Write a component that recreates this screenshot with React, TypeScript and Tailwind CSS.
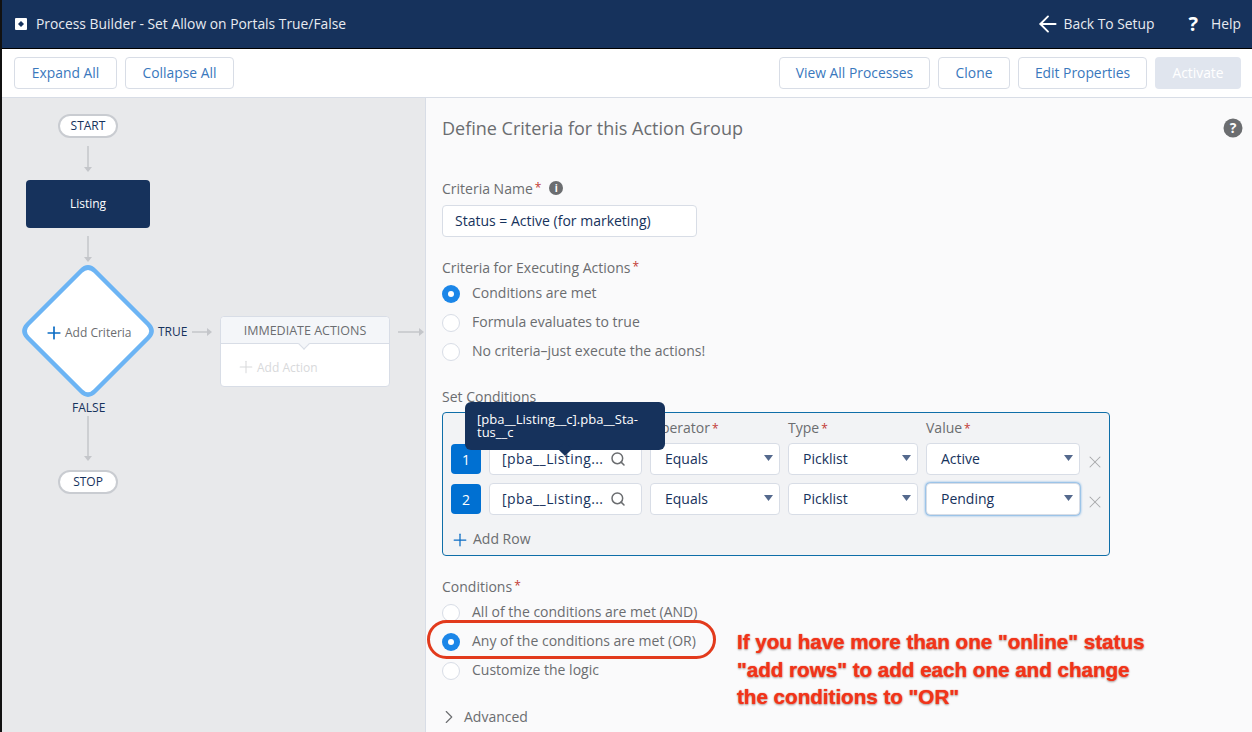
import { ArrowLeft, ChevronRight, Plus, Search, X } from "lucide-react"

const font = "font-['Open_Sans','Noto_Sans',sans-serif]"

function Star() {
  return <span className="ml-[2px] text-[12px] text-[#c23934]">*</span>
}

function ToolbarButton({ label, className = "" }: { label: string; className?: string }) {
  return (
    <button
      type="button"
      className={`h-8 rounded-[4px] border border-[#d8dde6] bg-white pt-[1px] text-[13.85px] text-[#3a78bd] ${className}`}
    >
      {label}
    </button>
  )
}

function Radio({ label, checked = false }: { label: string; checked?: boolean }) {
  return (
    <div className="flex h-[29px] items-center">
      {checked ? (
        <span className="flex h-[18px] w-[18px] items-center justify-center rounded-full bg-[#1b86e8]">
          <span className="h-[6px] w-[6px] rounded-full bg-white" />
        </span>
      ) : (
        <span className="h-[18px] w-[18px] rounded-full border border-[#d8dde6] bg-white" />
      )}
      <span className="ml-[12px] -translate-y-[1px] text-[14px] text-[#6b6d70]">{label}</span>
    </div>
  )
}

function Select({ value, className = "" }: { value: string; className?: string }) {
  return (
    <div
      className={`flex h-8 items-center justify-between rounded-[4px] border border-[#d8dde6] bg-white pl-[14px] text-[14px] text-[#16325c] ${className}`}
    >
      <span className="-translate-y-[1px]">{value}</span>
      <svg width="16" height="8" viewBox="0 0 16 8" className="-translate-y-[1px]">
        <path d="M1 1h9L5.5 7z" fill="#54698d" />
      </svg>
    </div>
  )
}

function ConditionRow({ n, value, focused }: { n: number; value: string; focused?: boolean }) {
  return (
    <div className="flex items-center">
      <div className="flex h-[30px] w-[30px] items-center justify-center rounded-[4px] bg-[#0070d2] text-[14px] text-white">
        {n}
      </div>
      <div className="ml-2 flex h-8 w-[153px] items-center justify-between rounded-[4px] border border-[#d8dde6] bg-white pl-[12px] pr-[15px] text-[14px] text-[#16325c]">
        <span className="-translate-y-[1px] whitespace-nowrap tracking-[0.4px]">[pba__Listing...</span>
        <Search size={16} strokeWidth={2.25} className="shrink-0 text-[#6b6d70]" />
      </div>
      <Select value="Equals" className="ml-2 w-[130px]" />
      <Select value="Picklist" className="ml-2 w-[130px]" />
      <Select
        value={value}
        className={`ml-2 w-[154px] ${focused ? "border-[#0070d2] shadow-[0_0_3px_#0070d2]" : ""}`}
      />
      <X size={20} strokeWidth={1.25} className="ml-[5px] translate-y-[3px] text-[#a8a9ab]" />
    </div>
  )
}

function ArrowDown({ x, y, h }: { x: number; y: number; h: number }) {
  return (
    <svg className="absolute" style={{ left: x - 5, top: y }} width="10" height={h} viewBox={`0 0 10 ${h}`}>
      <path d={`M5 0V${h - 4}`} stroke="#c4c6ca" strokeWidth="1.5" />
      <path d={`M1 ${h - 5}h8l-4 5z`} fill="#c4c6ca" />
    </svg>
  )
}

function ArrowRight({ x, y, w }: { x: number; y: number; w: number }) {
  return (
    <svg className="absolute" style={{ left: x, top: y - 5 }} width={w} height="10" viewBox={`0 0 ${w} 10`}>
      <path d={`M0 5H${w - 4}`} stroke="#c4c6ca" strokeWidth="1.5" />
      <path d={`M${w - 5} 1v8l5-4z`} fill="#c4c6ca" />
    </svg>
  )
}

function Pill({ label, top }: { label: string; top: number }) {
  return (
    <div
      className="absolute left-[56px] flex h-[24px] w-[60px] items-center justify-center rounded-full border-2 border-[#c9ccd1] bg-white text-[12px] text-[#16325c]"
      style={{ top }}
    >
      {label}
    </div>
  )
}

function Canvas() {
  return (
    <div className="relative w-[424px] shrink-0 border-r border-[#d8dde6] bg-[#e8e9eb]">
      {/* positions below are relative to the panel, which starts at y=98 */}
      <Pill label="START" top={16} />
      <ArrowDown x={86} y={48} h={26} />
      <div className="absolute left-[24px] top-[82px] flex h-[48px] w-[124px] items-center justify-center rounded-[4px] bg-[#16325c] text-[12px] text-white">
        Listing
      </div>
      <ArrowDown x={86} y={138} h={26} />
      <svg className="absolute left-[18px] top-[165px]" width="136" height="136" viewBox="0 0 136 136">
        <path
          d="M61 8Q68 1 75 8L128 61Q135 68 128 75L75 128Q68 135 61 128L8 75Q1 68 8 61Z"
          fill="white"
          stroke="#6cb4f4"
          strokeWidth="4.5"
        />
      </svg>
      <div className="absolute left-[42px] top-[225px] flex items-center text-[12px] text-[#6b6d70]">
        <Plus size={20} strokeWidth={2} className="mr-[1px] text-[#0b6cc4]" />
        Add Criteria
      </div>
      <div className="absolute left-[156px] top-[225px] text-[12px] text-[#16325c]">TRUE</div>
      <ArrowRight x={190} y={234} w={20} />
      <div className="absolute left-[218px] top-[218px] h-[71px] w-[170px] rounded-[4px] border border-[#d8dde6] bg-white">
        <div className="relative flex h-[27px] items-center justify-center rounded-t-[4px] border-b border-[#d8dde6] bg-[#f4f6f9] pt-[2px] text-[12.5px] text-[#6b6d70]">
          IMMEDIATE ACTIONS
          <span className="absolute -bottom-[5px] left-[79px] h-2 w-2 rotate-45 border-b border-r border-[#d8dde6] bg-[#f4f6f9]" />
        </div>
        <div className="flex items-center pl-[15px] pt-[14px] text-[12px] text-[#d8d9db]">
          <Plus size={20} strokeWidth={1.25} className="-translate-y-[1px]" />
          <span className="ml-[1px]">Add Action</span>
        </div>
      </div>
      <ArrowRight x={396} y={234} w={26} />
      <div className="absolute left-[70px] top-[301px] text-[12px] text-[#16325c]">FALSE</div>
      <ArrowDown x={86} y={318} h={45} />
      <Pill label="STOP" top={372} />
    </div>
  )
}

function Form() {
  return (
    <div className="relative min-w-0 flex-1 bg-[#fafafb]">
      <div className="flex h-[60px] items-center justify-between pl-[16px] pr-[9px]">
        <h2 className="text-[18px] font-normal text-[#6b6d70]">Define Criteria for this Action Group</h2>
        <svg width="20" height="20" viewBox="0 0 20 20">
          <circle cx="10" cy="10" r="9.5" fill="#6b6d70" />
          <text x="10" y="15" textAnchor="middle" fontSize="14" fontWeight="700" fill="#fafafb">
            ?
          </text>
        </svg>
      </div>
      <div className="px-[16px] pt-[20px]">
        <div className="flex h-5 items-center text-[14px] text-[#6b6d70]">
          Criteria Name
          <Star />
          <span className="ml-[8px] flex h-[14px] w-[14px] items-center justify-center rounded-full bg-[#6b6d70] text-[10px] font-bold text-white">
            i
          </span>
        </div>
        <div className="mt-[7px] flex h-8 w-[255px] items-center rounded-[4px] border border-[#d8dde6] bg-white pl-[12px] text-[14px] text-[#16325c]">
          <span className="-translate-y-[1px]">Status = Active (for marketing)</span>
        </div>

        <div className="mt-[20px] flex h-5 items-center text-[14px] text-[#6b6d70]">
          Criteria for Executing Actions
          <Star />
        </div>
        <div className="mt-[2px]">
          <Radio label="Conditions are met" checked />
          <Radio label="Formula evaluates to true" />
          <Radio label="No criteria–just execute the actions!" />
        </div>

        <div className="mt-[20px] flex h-5 items-center text-[14px] text-[#6b6d70]">Set Conditions</div>
        <div className="relative mt-[6px] h-[144px] w-[668px] rounded-[4px] border border-[#0f6ea8] bg-[#f2f3f5] pl-[8px]">
          <div className="flex h-[30px] items-start pt-[4px] text-[14px] text-[#6b6d70]">
            <span className="ml-[199px] w-[138px]">
              Operator
              <Star />
            </span>
            <span className="w-[138px]">
              Type
              <Star />
            </span>
            <span>
              Value
              <Star />
            </span>
          </div>
          <div className="flex flex-col gap-2">
            <ConditionRow n={1} value="Active" />
            <ConditionRow n={2} value="Pending" focused />
          </div>
          <div className="mt-[13px] flex items-center text-[14px] text-[#6b6d70]">
            <Plus size={20} strokeWidth={1.5} className="-translate-x-[1px] translate-y-[1px] text-[#0b6cc4]" />
            <span className="ml-[2px]">Add Row</span>
          </div>
          <div className="absolute -top-[11px] left-[22px] h-[48px] w-[200px] rounded-[6px] bg-[#16325c] px-[12px] pt-[11px] text-[13px] leading-[13px] text-white">
            [pba__Listing__c].pba__Sta-
            <br />
            tus__c
            <span className="absolute -bottom-[4px] left-[95px] h-[10px] w-[10px] rotate-45 bg-[#16325c]" />
          </div>
        </div>

        <div className="mt-[20px] flex h-5 items-center text-[14px] text-[#6b6d70]">
          Conditions
          <Star />
        </div>
        <div className="mt-[2px]">
          <Radio label="All of the conditions are met (AND)" />
          <Radio label="Any of the conditions are met (OR)" checked />
          <Radio label="Customize the logic" />
        </div>
        <div className="mt-[20px] flex items-center text-[14px] text-[#6b6d70]">
          <ChevronRight size={22} strokeWidth={1.25} className="-ml-[4px] translate-y-[1px]" />
          <span className="ml-[4px]">Advanced</span>
        </div>
      </div>

      {/* annotation on top of the screenshot */}
      <div className="absolute left-[1px] top-[522px] h-[39px] w-[289px] rounded-full border-[3px] border-[#e23a1c]" />
      <div className="absolute left-[311px] top-[530px] whitespace-nowrap font-['Liberation_Sans',sans-serif] text-[20.6px] font-bold leading-[27.5px] text-[#f0341a] [text-shadow:0_0_1px_#f0341a,0_0_2px_#fff,0_1px_2px_#888]">
        If you have more than one "online" status
        <br />
        "add rows" to add each one and change
        <br />
        the conditions to "OR"
      </div>
    </div>
  )
}

export default function App() {
  return (
    <div className={`flex h-[732px] w-[1252px] flex-col overflow-hidden border-l-2 border-[#111] bg-white ${font}`}>
      <header className="flex h-[49px] shrink-0 items-center justify-between border-b border-black bg-[#16325c] pl-[13px] pr-[11px] text-[13.85px] text-[#e8ebf0]">
        <div className="flex items-center">
          <svg width="12" height="12" viewBox="0 0 12 12">
            <path d="M1 0h10a1 1 0 011 1v10a1 1 0 01-1 1H1a1 1 0 01-1-1V1a1 1 0 011-1z" fill="white" />
            <path d="M6 3l3 3-3 3-3-3z" fill="#16325c" />
          </svg>
          <span className="ml-[9px] pt-[1px]">Process Builder - Set Allow on Portals True/False</span>
        </div>
        <div className="flex items-center">
          <ArrowLeft size={26} strokeWidth={1.75} className="text-white" />
          <span className="ml-[3px]">Back To Setup</span>
          <span className="ml-[34px] text-[20px] font-bold leading-none text-white">?</span>
          <span className="ml-[13px]">Help</span>
        </div>
      </header>
      <div className="flex h-[49px] shrink-0 items-center justify-between border-b border-[#d8dde6] bg-white pl-[12px] pr-[11px]">
        <div className="flex gap-2">
          <ToolbarButton label="Expand All" className="w-[103px]" />
          <ToolbarButton label="Collapse All" className="w-[109px]" />
        </div>
        <div className="flex gap-2">
          <ToolbarButton label="View All Processes" className="w-[151px]" />
          <ToolbarButton label="Clone" className="w-[72px]" />
          <ToolbarButton label="Edit Properties" className="w-[129px]" />
          <button
            type="button"
            className="h-8 w-[86px] rounded-[4px] bg-[#e0e5ee] pt-[1px] text-[13.85px] text-white"
          >
            Activate
          </button>
        </div>
      </div>
      <div className="flex min-h-0 flex-1">
        <Canvas />
        <Form />
      </div>
    </div>
  )
}
